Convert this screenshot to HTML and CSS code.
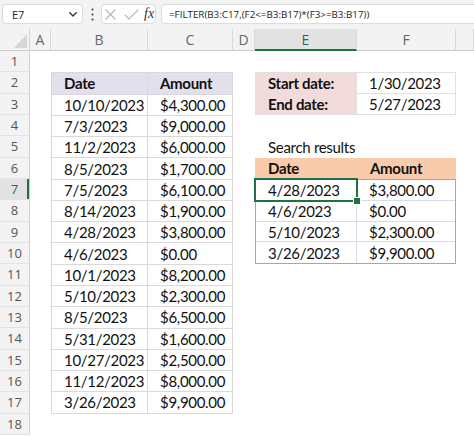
FILE: index.html
```html
<!DOCTYPE html>
<html>
<head>
<meta charset="utf-8">
<link rel="stylesheet" href="styles.css">
</head>
<body>
<div class="app">
  <div class="fbar">
    <div class="namebox">
      <span class="ref">E7</span>
      <svg class="chev" width="8" height="5" viewBox="0 0 8 5"><path d="M0.8 0.8 L4 4 L7.2 0.8" fill="none" stroke="#333" stroke-width="1.4" stroke-linecap="round" stroke-linejoin="round"/></svg>
    </div>
    <svg class="vdots" width="3" height="13" viewBox="0 0 3 13"><circle cx="1.5" cy="1.5" r="1.1" fill="#444"/><circle cx="1.5" cy="6.5" r="1.1" fill="#444"/><circle cx="1.5" cy="11.5" r="1.1" fill="#444"/></svg>
    <div class="fbtns">
      <svg class="ico-x" width="11" height="11" viewBox="0 0 11 11"><path d="M0.5 0.5 L10.5 10.5 M10.5 0.5 L0.5 10.5" stroke="#b4b4b4" stroke-width="1.1" fill="none"/></svg>
      <svg class="ico-ok" width="15" height="11" viewBox="0 0 15 11"><path d="M0.6 5.6 L5 10 L14.4 0.6" stroke="#b4b4b4" stroke-width="1.1" fill="none"/></svg>
      <span class="fx">fx</span>
    </div>
    <div class="formula">=FILTER(B3:C17,(F2&lt;=B3:B17)*(F3&gt;=B3:B17))</div>
  </div>

  <div class="sheet">
    <div class="corner"><svg width="13" height="14" viewBox="0 0 13 14"><polygon points="13,0 13,14 0,14" fill="#d6d6d6"/></svg></div>
    <div class="ch">A</div>
    <div class="ch">B</div>
    <div class="ch">C</div>
    <div class="ch">D</div>
    <div class="ch sel">E</div>
    <div class="ch">F</div>
    <div class="ch"></div>

    <div class="rheads">
      <div class="rh">1</div>
      <div class="rh">2</div>
      <div class="rh">3</div>
      <div class="rh">4</div>
      <div class="rh">5</div>
      <div class="rh">6</div>
      <div class="rh sel">7</div>
      <div class="rh">8</div>
      <div class="rh">9</div>
      <div class="rh">10</div>
      <div class="rh">11</div>
      <div class="rh">12</div>
      <div class="rh">13</div>
      <div class="rh">14</div>
      <div class="rh">15</div>
      <div class="rh">16</div>
      <div class="rh">17</div>
      <div class="rh">18</div>
    </div>

    <div class="data">
      <div class="c hd">Date</div><div class="c hd">Amount</div>
      <div class="c">10/10/2023</div><div class="c">$4,300.00</div>
      <div class="c">7/3/2023</div><div class="c">$9,000.00</div>
      <div class="c">11/2/2023</div><div class="c">$6,000.00</div>
      <div class="c">8/5/2023</div><div class="c">$1,700.00</div>
      <div class="c">7/5/2023</div><div class="c">$6,100.00</div>
      <div class="c">8/14/2023</div><div class="c">$1,900.00</div>
      <div class="c">4/28/2023</div><div class="c">$3,800.00</div>
      <div class="c">4/6/2023</div><div class="c">$0.00</div>
      <div class="c">10/1/2023</div><div class="c">$8,200.00</div>
      <div class="c">5/10/2023</div><div class="c">$2,300.00</div>
      <div class="c">8/5/2023</div><div class="c">$6,500.00</div>
      <div class="c">5/31/2023</div><div class="c">$1,600.00</div>
      <div class="c">10/27/2023</div><div class="c">$2,500.00</div>
      <div class="c">11/12/2023</div><div class="c">$8,000.00</div>
      <div class="c">3/26/2023</div><div class="c">$9,900.00</div>
    </div>

    <div class="crit">
      <div class="c lbl">Start date:</div><div class="c">1/30/2023</div>
      <div class="c lbl">End date:</div><div class="c">5/27/2023</div>
    </div>

    <div class="srlabel">Search results</div>

    <div class="results">
      <div class="rhead">
        <div class="p">Date</div><div class="p">Amount</div>
      </div>
      <div class="rbody">
        <div class="r cur">4/28/2023</div><div class="r">$3,800.00</div>
        <div class="r">4/6/2023</div><div class="r">$0.00</div>
        <div class="r">5/10/2023</div><div class="r">$2,300.00</div>
        <div class="r">3/26/2023</div><div class="r">$9,900.00</div>
      </div>
    </div>
  </div>
</div>
</body>
</html>
```

FILE: styles.css
```css
* {
  box-sizing: border-box;
  margin: 0;
  padding: 0;
}

html, body {
  width: 474px;
  height: 437px;
  overflow: hidden;
  background: #ffffff;
}

body {
  font-family: "Lato", "Liberation Sans", sans-serif;
  color: #111;
}

.app {
  width: 474px;
  height: 437px;
  overflow: hidden;
}

/* ---------- formula bar ---------- */
.fbar {
  height: 29px;
  background: #f3f3f3;
  display: flex;
  align-items: center;
  padding-left: 2px;
  padding-bottom: 1px;
}

.namebox {
  flex: none;
  width: 81px;
  height: 20px;
  background: #fff;
  border: 1px solid #dcdcdc;
  border-radius: 4px;
  display: flex;
  align-items: center;
  justify-content: space-between;
  padding: 0 5px 0 9px;
}

.ref {
  font-family: "Open Sans", sans-serif;
  font-size: 11px;
  color: #222;
}

.vdots {
  flex: none;
  margin: 0 7px 0 8px;
}

.fbtns {
  flex: none;
  width: 55px;
  height: 20px;
  background: #fff;
  border: 1px solid #dcdcdc;
  border-radius: 4px;
  display: flex;
  align-items: center;
  padding-left: 3px;
}

.ico-x {
  margin-right: 8px;
}

.ico-ok {
  margin-right: 5px;
}

.fx {
  font-family: "Liberation Serif", serif;
  font-style: italic;
  font-size: 14px;
  color: #333;
  line-height: 1;
}

.formula {
  flex: none;
  width: 330px;
  height: 20px;
  margin-left: 5px;
  background: #fff;
  border: 1px solid #dcdcdc;
  border-radius: 4px;
  display: flex;
  align-items: center;
  padding-left: 7px;
  font-family: "Open Sans", sans-serif;
  font-size: 9.8px;
  color: #222;
  white-space: nowrap;
}

/* ---------- sheet ---------- */
.sheet {
  display: grid;
  grid-template-columns: 30px 21px 97px 85px 22px 102px 99px 1fr;
  grid-template-rows: 22px repeat(18, 21.333px);
}

.corner {
  background: #f3f3f3;
  border-right: 1px solid #d4d4d4;
  border-bottom: 1px solid #c9c9c9;
  display: flex;
  align-items: flex-end;
  justify-content: flex-end;
  padding: 0 2px 2px 0;
}

.ch {
  background: #f3f3f3;
  border-right: 1px solid #d9d9d9;
  border-bottom: 1px solid #c9c9c9;
  display: flex;
  align-items: center;
  justify-content: center;
  font-family: "Open Sans", sans-serif;
  font-size: 14px;
  color: #666;
}

.ch.sel {
  background: #e2e2e2;
  border-bottom: 2px solid #1e7145;
  color: #2c6c46;
}

.rheads {
  grid-column: 1;
  grid-row: 2 / span 18;
  display: flex;
  flex-direction: column;
  background: #f3f3f3;
  border-right: 1px solid #d0d0d0;
}

.rh {
  flex: none;
  height: 21.333px;
  display: flex;
  align-items: center;
  justify-content: center;
  border-bottom: 1px solid #e3e3e3;
  font-family: "Open Sans", sans-serif;
  font-size: 13px;
  color: #555;
}

.rh.sel {
  background: #e2e2e2;
  box-shadow: inset -2px 0 0 #1e7145;
  color: #2c6c46;
}

/* cells shared */
.c, .p, .r, .srlabel {
  font-size: 15px;
  letter-spacing: -0.3px;
  white-space: nowrap;
  display: flex;
  align-items: center;
  padding-left: 12px;
}

/* left data table B2:C17 */
.data {
  grid-column: 3 / span 2;
  grid-row: 3 / span 16;
  display: grid;
  grid-template-columns: 96px 1fr;
  grid-template-rows: repeat(16, 1fr);
  border-left: 1px solid #d9d9d9;
  border-top: 1px solid #d9d9d9;
}

.c {
  border-right: 1px solid #d9d9d9;
  border-bottom: 1px solid #d9d9d9;
}

.hd {
  background: #e4dfec;
  font-weight: 700;
}

/* criteria E2:F3 */
.crit {
  grid-column: 6 / span 2;
  grid-row: 3 / span 2;
  display: grid;
  grid-template-columns: 101px 1fr;
  grid-template-rows: 1fr 1fr;
  border-left: 1px solid #e0e0e0;
  border-top: 1px solid #e0e0e0;
}

.crit .c {
  border-color: #e0e0e0;
}

.lbl {
  background: #f2dcdb;
  font-weight: 700;
}

.srlabel {
  grid-column: 6 / span 2;
  grid-row: 6;
  padding-left: 13px;
}

/* results E6:F10 */
.results {
  grid-column: 6 / span 2;
  grid-row: 7 / span 5;
  display: flex;
  flex-direction: column;
}

.rhead {
  flex: none;
  height: 21.333px;
  display: grid;
  grid-template-columns: 102px 1fr;
  background: #f8cbad;
}

.p {
  font-weight: 700;
  padding-left: 13px;
}

.rbody {
  flex: 1;
  display: grid;
  grid-template-columns: 101px 1fr;
  grid-template-rows: repeat(4, 1fr);
  border: 1px solid #8eaadb;
}

.r {
  padding-left: 12px;
  border-bottom: 1px solid #d5dcea;
}

.r:nth-child(odd) {
  border-right: 1px solid #d5dcea;
}

.r:nth-last-child(-n+2) {
  border-bottom: none;
}

.r.cur {
  position: relative;
}

.r.cur::after {
  content: "";
  position: absolute;
  left: -2px;
  top: -2px;
  right: -2px;
  bottom: -2px;
  border: 2px solid #1e7145;
}

.r.cur::before {
  content: "";
  position: absolute;
  right: -5px;
  bottom: -5px;
  width: 6px;
  height: 6px;
  background: #1e7145;
  border: 1px solid #fff;
  z-index: 2;
}
```
